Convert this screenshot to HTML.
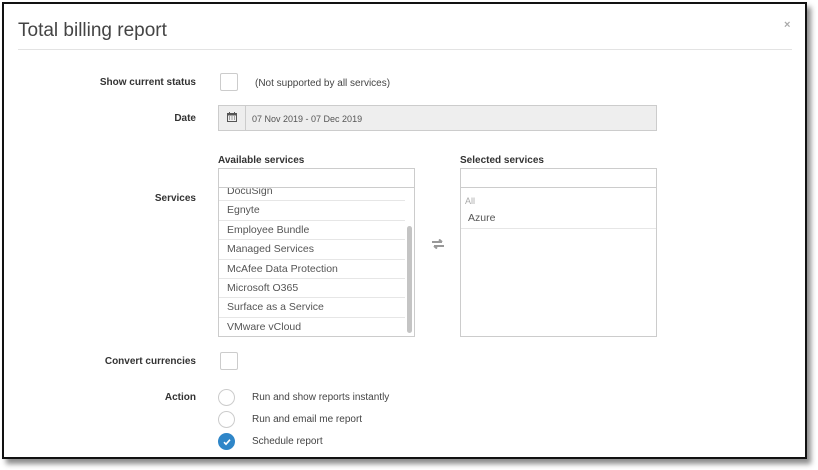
<!DOCTYPE html>
<html><head><style>
*{box-sizing:border-box;margin:0;padding:0}
body{width:818px;height:470px;background:#fff;position:relative;overflow:hidden;font-family:"Liberation Sans",sans-serif;color:#444}
.frame{position:absolute;left:2px;top:2px;width:805px;height:457px;border:2px solid #111;background:#fff;box-shadow:4px 5px 5px rgba(0,0,0,.45)}
.a{position:absolute}
.lbl{position:absolute;right:622px;font-size:10px;font-weight:bold;color:#333;text-align:right;white-space:nowrap}
.cb{position:absolute;width:18px;height:18px;border:1px solid #ccc;border-radius:2px;background:#fff}
.box{position:absolute;border:1px solid #ccc;background:#fff}
.row{height:19.4px;border-bottom:1px solid #e6e6e6;font-size:10.5px;color:#555;padding-left:8px;line-height:19px}
.rad{position:absolute;left:218px;width:17px;height:17px;border:1px solid #ccc;border-radius:50%}
.rt{position:absolute;left:252px;font-size:10px;color:#444}
</style></head><body>
<div class="frame"></div>
<div class="a" style="left:18px;top:20px;font-size:19px;color:#444">Total billing report</div>
<div class="a" style="left:784px;top:19px;font-size:11px;color:#aaa;font-weight:bold">×</div>
<div class="a" style="left:18px;top:49px;width:774px;height:1px;background:#e3e3e3"></div>

<div class="lbl" style="top:77px">Show current status</div>
<div class="cb" style="left:220px;top:73px"></div>
<div class="a" style="left:255px;top:78px;font-size:10px;color:#444">(Not supported by all services)</div>

<div class="lbl" style="top:113px">Date</div>
<div class="a" style="left:218px;top:105px;width:439px;height:26px;background:#eee;border:1px solid #ccc"></div>
<div class="a" style="left:245px;top:106px;width:1px;height:24px;background:#ccc"></div>
<svg class="a" style="left:227px;top:112px" width="10" height="10" viewBox="0 0 10 10"><rect x="0.5" y="1.5" width="9" height="8" fill="none" stroke="#555"/><rect x="0.5" y="1.5" width="9" height="2" fill="#555"/><path d="M2 5h1M4.5 5h1M7 5h1M2 7h1M4.5 7h1M7 7h1" stroke="#555"/><path d="M2.5 0v2M7.5 0v2" stroke="#555"/></svg>
<div class="a" style="left:252px;top:114px;font-size:9px;color:#555">07 Nov 2019 - 07 Dec 2019</div>

<div class="a" style="left:218px;top:155px;font-size:10px;font-weight:bold;color:#333">Available services</div>
<div class="box" style="left:218px;top:168px;width:197px;height:20px"></div>
<div class="lbl" style="top:193px">Services</div>
<div class="box" style="left:218px;top:188px;width:197px;height:149px;overflow:hidden;border-top:none">
<div style="margin-top:-6px;width:186px">
<div class="row">DocuSign</div><div class="row">Egnyte</div><div class="row">Employee Bundle</div><div class="row">Managed Services</div><div class="row">McAfee Data Protection</div><div class="row">Microsoft O365</div><div class="row">Surface as a Service</div><div class="row" style="border-bottom:none">VMware vCloud</div>
</div></div>
<div class="a" style="left:407px;top:226px;width:5px;height:107px;background:#c4c4c4;border-radius:3px"></div>

<svg class="a" style="left:430px;top:239px" width="16" height="10" viewBox="0 0 16 10"><path d="M2 3h10M9 0.5l3 2.5M14 7H4M7 9.5L4 7" stroke="#999" stroke-width="2" fill="none"/></svg>

<div class="a" style="left:460px;top:155px;font-size:10px;font-weight:bold;color:#333">Selected services</div>
<div class="box" style="left:460px;top:168px;width:197px;height:20px"></div>
<div class="box" style="left:460px;top:188px;width:197px;height:149px;border-top:none"></div>
<div class="a" style="left:465px;top:196px;font-size:9px;color:#aaa">All</div>
<div class="a" style="left:461px;top:209px;width:195px;height:20px;border-bottom:1px solid #e6e6e6;font-size:10.5px;color:#555;padding-left:7px;line-height:19px">Azure</div>

<div class="lbl" style="top:356px">Convert currencies</div>
<div class="cb" style="left:220px;top:352px"></div>

<div class="lbl" style="top:392px">Action</div>
<div class="rad" style="top:389px"></div><div class="rt" style="top:392px">Run and show reports instantly</div>
<div class="rad" style="top:411px"></div><div class="rt" style="top:414px">Run and email me report</div>
<div class="rad" style="top:433px;background:#2f86c8;border-color:#2f86c8"></div>
<svg class="a" style="left:221px;top:436px" width="12" height="12" viewBox="0 0 12 12"><path d="M3 6.2l2 2 4-4.5" stroke="#fff" stroke-width="1.6" fill="none"/></svg>
<div class="rt" style="top:436px">Schedule report</div>
</body></html>
